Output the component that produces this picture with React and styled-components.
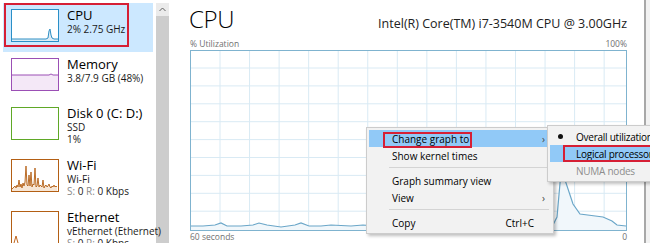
import React from "react";
import styled, { createGlobalStyle } from "styled-components";

const GlobalStyle = createGlobalStyle`
  html, body {
    margin: 0;
    padding: 0;
    background: #fff;
    overflow: hidden;
  }
  body {
    font-family: "Open Sans", "Noto Sans", sans-serif;
    color: #000;
  }
`;

const Window = styled.div`
  position: relative;
  display: flex;
  width: 650px;
  height: 243px;
  overflow: hidden;
  background: #fff;
`;

const Sidebar = styled.div`
  width: 153px;
  padding: 3px 0 0 3px;
  display: flex;
  flex-direction: column;
  flex-shrink: 0;
`;

const NavItem = styled.div`
  position: relative;
  display: flex;
  gap: 8px;
  width: 150px;
  box-sizing: border-box;
  padding: 6px 0 8px 8px;
  background: ${(p) => (p.selected ? "#cce8ff" : "transparent")};
`;

const Mark = styled.div`
  position: absolute;
  left: ${(p) => p.left}px;
  top: ${(p) => p.top}px;
  width: ${(p) => p.width}px;
  height: ${(p) => p.height}px;
  border: 2px solid #d61f35;
  box-sizing: border-box;
  pointer-events: none;
`;

const Thumb = styled.div`
  width: 48px;
  height: 33px;
  box-sizing: border-box;
  border: 1px solid ${(p) => p.color};
  background: #fff;
  flex-shrink: 0;
  margin-bottom: 2px;
  svg {
    display: block;
  }
`;

const NavText = styled.div`
  display: flex;
  flex-direction: column;
  white-space: nowrap;
`;

const NavTitle = styled.div`
  font-size: 13px;
  line-height: 15px;
  margin-top: -1px;
`;

const NavSub = styled.div`
  font-size: 10px;
  line-height: 12px;
  color: #1a1a1a;
  span {
    color: #8a8a8a;
  }
`;

const ScrollTrack = styled.div`
  width: 13px;
  margin-top: 3px;
  display: flex;
  flex-direction: column;
  flex-shrink: 0;
`;

const ScrollArrow = styled.div`
  height: 13px;
  background: #ebebeb;
  display: flex;
  align-items: center;
  justify-content: center;
`;

const ScrollThumb = styled.div`
  flex: 1;
  background: #cdcdcd;
`;

const Main = styled.div`
  flex: 1;
  padding: 0 17px 0 20px;
  display: flex;
  flex-direction: column;
`;

const Header = styled.div`
  display: flex;
  justify-content: space-between;
  align-items: baseline;
  height: 38px;
`;

const BigTitle = styled.div`
  font-size: 24px;
  font-weight: 300;
  line-height: 38px;
  letter-spacing: -0.3px;
`;

const CpuName = styled.div`
  font-size: 12.5px;
  color: #222;
`;

const AxisRow = styled.div`
  display: flex;
  justify-content: space-between;
  font-size: 8.5px;
  line-height: 12px;
  color: #707070;
  padding-left: 1px;
  height: ${(p) => p.h}px;
`;

const Graph = styled.div`
  width: 437px;
  height: 181px;
  box-sizing: border-box;
  border: 1px solid #7fb3cf;
  margin-left: 1px;
  svg {
    display: block;
  }
`;

const WindowEdge = styled.div`
  width: 6px;
  flex-shrink: 0;
  border-left: 2px solid #a8a8a8;
  background: #f2f2f2;
`;

const Menu = styled.div`
  position: absolute;
  left: ${(p) => p.left}px;
  top: ${(p) => p.top}px;
  width: ${(p) => p.width}px;
  padding: 2px;
  background: #f2f2f2;
  border: 1px solid #cccccc;
  box-shadow: 2px 2px 3px rgba(0, 0, 0, 0.25);
  font-size: 10px;
  letter-spacing: ${(p) => p.tight ? "-0.25px" : "0"};
  box-sizing: border-box;
`;

const MenuItem = styled.div`
  position: relative;
  display: flex;
  align-items: center;
  height: 17px;
  padding: 0 8px 0 ${(p) => p.indent}px;
  background: ${(p) => (p.active ? "#91c9f7" : "transparent")};
  color: ${(p) => (p.disabled ? "#8d8d8d" : "#000")};
  white-space: nowrap;
`;

const ItemLabel = styled.span`
  flex: 1;
`;

const Shortcut = styled.span`
  margin-right: 9px;
`;

const Chevron = styled.span`
  font-size: 10px;
  color: #444;
  margin-right: -2px;
`;

const Bullet = styled.span`
  position: absolute;
  left: 8px;
  top: 6px;
  width: 5px;
  height: 5px;
  border-radius: 50%;
  background: #111;
`;

const Separator = styled.div`
  height: 1px;
  background: #d4d4d4;
  margin: 3px 2px 4px 20px;
`;

function CpuThumb() {
  return (
    <svg width="46" height="31" viewBox="0 0 46 31">
      <path
        d="M0 29 L34 29 L36 28 L37 21 L38 19 L39 25 L40 28 L42 29 L46 29 L46 31 L0 31 Z"
        fill="#dcecf6"
      />
      <path
        d="M0 29 L34 29 L36 28 L37 21 L38 19 L39 25 L40 28 L42 29 L46 29"
        fill="none"
        stroke="#2f8fc4"
        strokeWidth="1"
      />
    </svg>
  );
}

function MemThumb() {
  return (
    <svg width="46" height="31" viewBox="0 0 46 31">
      <rect x="0" y="16" width="46" height="15" fill="#f4e8f7" />
      <path d="M0 16 L37 16 L39 15 L41 16 L46 16" fill="none" stroke="#9b4fb5" strokeWidth="1" />
    </svg>
  );
}

function WifiThumb() {
  const pts = [
    29, 28, 27, 26, 28, 25, 27, 20, 27, 24, 28, 23, 26, 22, 6, 25, 26, 15, 26, 12, 27, 24, 25, 8, 27,
    26, 18, 27, 25, 26, 27, 20, 28, 26, 25, 27, 26, 24, 27, 28, 26, 27, 25, 27, 26, 27,
  ];
  const d = pts.map((y, i) => `${i === 0 ? "M" : "L"}${i} ${y}`).join(" ");
  return (
    <svg width="46" height="31" viewBox="0 0 46 31">
      <path d={`${d} L45 31 L0 31 Z`} fill="#f6e6d6" />
      <path d={d} fill="none" stroke="#b35f14" strokeWidth="0.9" />
    </svg>
  );
}

function EthThumb() {
  return (
    <svg width="46" height="31" viewBox="0 0 46 31">
      <path d="M2 31 L4 24 L6 31" fill="none" stroke="#c0651c" strokeWidth="1" />
    </svg>
  );
}

const navItems = [
  { title: "CPU", lines: ["2%  2.75 GHz"], color: "#2a8fc7", thumb: <CpuThumb />, selected: true },
  { title: "Memory", lines: ["3.8/7.9 GB (48%)"], color: "#9b4fb5", thumb: <MemThumb /> },
  { title: "Disk 0 (C: D:)", lines: ["SSD", "1%"], color: "#5fa826", thumb: null },
  {
    title: "Wi-Fi",
    lines: ["Wi-Fi", "kbps"],
    color: "#b35f14",
    thumb: <WifiThumb />,
  },
  {
    title: "Ethernet",
    lines: ["vEthernet (Ethernet)", "kbps"],
    color: "#b35f14",
    thumb: <EthThumb />,
  },
];

function Rate() {
  return (
    <>
      <span>S:</span> 0 <span>R:</span> 0 Kbps
    </>
  );
}

function CpuGraph() {
  const W = 435;
  const H = 179;
  const vlines = [];
  for (let x = 29; x < W; x += 29.55) vlines.push(x);
  const hlines = [];
  for (let y = 17; y < H; y += 17.9) hlines.push(y);
  const pts = [
    [0, 175], [12, 175], [24, 174], [30, 172], [36, 175], [50, 175], [62, 174], [68, 172],
    [76, 174], [90, 176], [104, 174], [110, 172], [118, 175], [130, 175], [140, 174],
    [160, 175], [172, 174], [185, 175], [200, 174], [215, 175], [230, 174], [250, 175],
    [270, 174], [290, 175], [310, 174], [330, 175], [350, 174], [362, 174], [366, 166],
    [370, 121], [372, 96], [374, 129], [382, 153], [389, 163], [412, 166], [421, 170],
    [426, 174], [435, 175],
  ];
  const d = pts.map(([x, y], i) => `${i === 0 ? "M" : "L"}${x} ${y}`).join(" ");
  return (
    <svg width={W} height={H} viewBox={`0 0 ${W} ${H}`}>
      {vlines.map((x) => (
        <line key={"v" + x} x1={x} y1="0" x2={x} y2={H} stroke="#d9eaf4" strokeWidth="1" />
      ))}
      {hlines.map((y) => (
        <line key={"h" + y} x1="0" y1={y} x2={W} y2={y} stroke="#d9eaf4" strokeWidth="1" />
      ))}
      <path d={`${d} L${W} ${H} L0 ${H} Z`} fill="#f1f7fb" />
      <path d={d} fill="none" stroke="#6aa6c8" strokeWidth="1.2" />
    </svg>
  );
}

export default function App() {
  return (
    <>
      <GlobalStyle />
      <Window>
        <Sidebar>
          {navItems.map((item) => (
            <NavItem key={item.title} selected={item.selected}>
              {item.selected && <Mark left={1} top={0} width={125} height={44} />}
              <Thumb color={item.color}>{item.thumb}</Thumb>
              <NavText>
                <NavTitle>{item.title}</NavTitle>
                {item.lines.map((l, i) => (
                  <NavSub key={i}>{l === "kbps" ? <Rate /> : l}</NavSub>
                ))}
              </NavText>
            </NavItem>
          ))}
        </Sidebar>
        <ScrollTrack>
          <ScrollArrow>
            <svg width="7" height="5" viewBox="0 0 7 5">
              <path d="M0.5 4 L3.5 1 L6.5 4" fill="none" stroke="#606060" strokeWidth="1" />
            </svg>
          </ScrollArrow>
          <ScrollThumb />
        </ScrollTrack>
        <Main>
          <Header>
            <BigTitle>CPU</BigTitle>
            <CpuName>Intel(R) Core(TM) i7-3540M CPU @ 3.00GHz</CpuName>
          </Header>
          <AxisRow h={15}>
            <span>% Utilization</span>
            <span>100%</span>
          </AxisRow>
          <Graph>
            <CpuGraph />
          </Graph>
          <AxisRow h={12}>
            <span>60 seconds</span>
            <span>0</span>
          </AxisRow>
        </Main>
        <WindowEdge />

        <Menu left={366} top={127} width={188}>
          <MenuItem indent={23} active>
            <ItemLabel>Change graph to</ItemLabel>
            <Chevron>›</Chevron>
            <Mark left={14} top={2} width={89} height={16} />
          </MenuItem>
          <MenuItem indent={23}>
            <ItemLabel>Show kernel times</ItemLabel>
          </MenuItem>
          <Separator />
          <MenuItem indent={23}>
            <ItemLabel>Graph summary view</ItemLabel>
          </MenuItem>
          <MenuItem indent={23}>
            <ItemLabel>View</ItemLabel>
            <Chevron>›</Chevron>
          </MenuItem>
          <Separator />
          <MenuItem indent={23}>
            <ItemLabel>Copy</ItemLabel>
            <Shortcut>Ctrl+C</Shortcut>
          </MenuItem>
        </Menu>

        <Menu left={547} top={125} width={130} tight>
          <MenuItem indent={26}>
            <Bullet />
            <ItemLabel>Overall utilization</ItemLabel>
          </MenuItem>
          <MenuItem indent={26} active>
            <ItemLabel>Logical processors</ItemLabel>
            <Mark left={13} top={0} width={90} height={17} />
          </MenuItem>
          <MenuItem indent={26} disabled>
            <ItemLabel>NUMA nodes</ItemLabel>
          </MenuItem>
        </Menu>
      </Window>
    </>
  );
}
